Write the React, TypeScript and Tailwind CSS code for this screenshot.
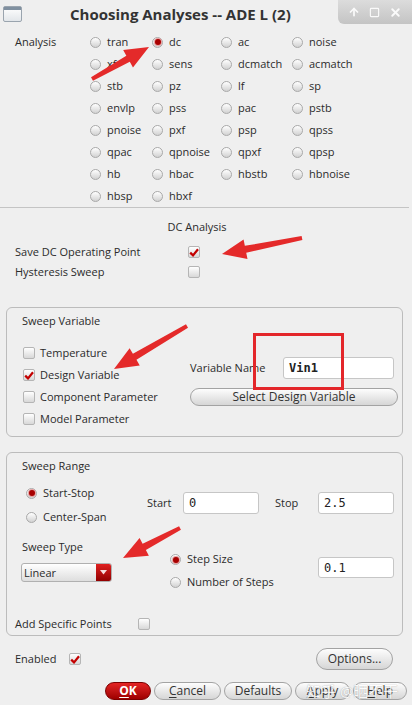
import React from 'react';
import { ArrowUp, Square, X } from 'lucide-react';

const Radio = ({ checked = false }: { checked?: boolean }) => (
  <span className="inline-flex h-[11px] w-[11px] shrink-0 items-center justify-center rounded-full border border-[#a9a9a9] bg-linear-to-b from-white to-[#d2d2d2]">
    {checked && <span className="h-[6px] w-[6px] rounded-full bg-[#a80000] shadow-[0_0_0_1px_#e7a0a0]" />}
  </span>
);

const Check = ({ checked = false }: { checked?: boolean }) => (
  <span className="inline-flex h-[12px] w-[12px] shrink-0 items-center justify-center rounded-[2px] border border-[#b5b5b5] bg-linear-to-b from-white to-[#d8d8d8]">
    {checked && (
      <svg width="10" height="9" viewBox="0 0 10 9">
        <path d="M1.2 4.6 L4 7.4 L9 1.2" stroke="#c30000" strokeWidth="2.2" fill="none" />
      </svg>
    )}
  </span>
);

const Pill = ({ children, className = '' }: { children: React.ReactNode; className?: string }) => (
  <div
    className={`flex items-center justify-center rounded-full border border-[#a3a3a3] bg-linear-to-b from-[#fdfdfd] to-[#d6d6d6] text-[12px] text-[#333] ${className}`}
  >
    {children}
  </div>
);

const Field = ({ value, className = '' }: { value: string; className?: string }) => (
  <div
    className={`flex items-center rounded-[3px] border border-[#c6c6c6] bg-white pl-[5px] font-['DejaVu_Sans_Mono',monospace] text-[12px] text-[#222] ${className}`}
  >
    {value}
  </div>
);

const Arrow = ({ x1, y1, x2, y2 }: { x1: number; y1: number; x2: number; y2: number }) => {
  const dx = x2 - x1;
  const dy = y2 - y1;
  const len = Math.hypot(dx, dy);
  const ux = dx / len;
  const uy = dy / len;
  const nx = -uy;
  const ny = ux;
  const head = 24;
  const hw = 10;
  const bx = x2 - ux * head;
  const by = y2 - uy * head;
  const pts = [
    [x1 + nx * 2, y1 + ny * 2],
    [bx + nx * 3.5, by + ny * 3.5],
    [bx + nx * hw, by + ny * hw],
    [x2, y2],
    [bx - nx * hw, by - ny * hw],
    [bx - nx * 3.5, by - ny * 3.5],
    [x1 - nx * 2, y1 - ny * 2],
  ]
    .map((p) => p.join(','))
    .join(' ');
  return <polygon points={pts} fill="#e42a2a" />;
};

const analyses = [
  ['tran', 'dc', 'ac', 'noise'],
  ['xf', 'sens', 'dcmatch', 'acmatch'],
  ['stb', 'pz', 'lf', 'sp'],
  ['envlp', 'pss', 'pac', 'pstb'],
  ['pnoise', 'pxf', 'psp', 'qpss'],
  ['qpac', 'qpnoise', 'qpxf', 'qpsp'],
  ['hb', 'hbac', 'hbstb', 'hbnoise'],
  ['hbsp', 'hbxf'],
];

export default function App() {
  return (
    <div className="relative h-[705px] w-[412px] overflow-hidden bg-[#efefef] font-['Open_Sans','Noto_Sans_CJK_SC',sans-serif] text-[11px] text-[#2b2b2b]">
      {/* title bar */}
      <div className="relative flex h-[28px] items-center">
        <div className="ml-[3px] h-[16px] w-[19px] rounded-[2px] border border-[#9aa4ae] bg-linear-to-b from-[#ffffff] to-[#e2e6ea]">
          <div className="h-[3px] bg-[#8090a0]" />
        </div>
        <div className="ml-[48px] text-[15px] font-bold text-[#333]">Choosing Analyses -- ADE L (2)</div>
        <div className="absolute right-0 top-0 flex h-[24px] w-[74px] items-center justify-around rounded-bl-[6px] bg-linear-to-b from-[#dcdcdc] to-[#c4c4c4] px-[6px]">
          <ArrowUp size={12} strokeWidth={3.5} color="#fafafa" />
          <Square size={11} strokeWidth={2.5} color="#fafafa" />
          <X size={13} strokeWidth={3.5} color="#fafafa" />
        </div>
      </div>

      {/* analysis */}
      <div className="flex pl-[15px] pt-[3px]">
        <div className="flex h-[22px] w-[75px] items-center">Analysis</div>
        <div className="grid grid-cols-[62px_69px_71px_1fr]">
          {analyses.flat().map((a) => (
            <div key={a} className="flex h-[22px] items-center gap-[6px]">
              <Radio checked={a === 'dc'} />
              <span>{a}</span>
            </div>
          ))}
        </div>
      </div>
      <div className="mr-[3px] border-t border-[#c4c4c4]" />

      {/* DC Analysis */}
      <div className="mt-[8px] flex h-[22px] items-center justify-center pr-[18px]">DC Analysis</div>
      <div className="mt-[4px] pl-[15px]">
        <div className="flex h-[20px] items-center">
          <span className="w-[173px]">Save DC Operating Point</span>
          <Check checked />
        </div>
        <div className="flex h-[20px] items-center">
          <span className="w-[173px]">Hysteresis Sweep</span>
          <Check />
        </div>
      </div>

      {/* Sweep Variable */}
      <div className="ml-[6px] mr-[9px] mt-[25px] rounded-[6px] border border-[#bcbcbc] pb-[6px] pt-[3px]">
        <div className="flex h-[20px] items-center pl-[15px]">Sweep Variable</div>
        <div className="mt-[11px] flex">
          <div className="w-[183px] pl-[16px]">
            {[
              ['Temperature', false],
              ['Design Variable', true],
              ['Component Parameter', false],
              ['Model Parameter', false],
            ].map(([t, c]) => (
              <div key={t as string} className="flex h-[22px] items-center gap-[5px]">
                <Check checked={c as boolean} />
                <span>{t}</span>
              </div>
            ))}
          </div>
          <div className="flex-1 pr-[4px] pt-[15px]">
            <div className="flex h-[22px] items-center">
              <span className="w-[93px]">Variable Name</span>
              <Field value="Vin1" className="h-[22px] w-[111px] font-bold" />
            </div>
            <Pill className="mt-[9px] h-[18px] w-full">Select Design Variable</Pill>
          </div>
        </div>
      </div>

      {/* Sweep Range */}
      <div className="ml-[6px] mr-[9px] mt-[15px] rounded-[6px] border border-[#bcbcbc] pb-[1px] pt-[3px]">
        <div className="flex h-[20px] items-center pl-[15px]">Sweep Range</div>
        <div className="mt-[5px] flex">
          <div className="w-[140px] pl-[19px]">
            <div className="flex h-[24px] items-center gap-[6px]">
              <Radio checked />
              <span>Start-Stop</span>
            </div>
            <div className="flex h-[24px] items-center gap-[6px]">
              <Radio />
              <span>Center-Span</span>
            </div>
          </div>
          <div className="mt-[11px] flex h-[22px] items-center">
            <span className="w-[36px]">Start</span>
            <Field value="0" className="h-[22px] w-[76px]" />
            <span className="ml-[16px] w-[43px]">Stop</span>
            <Field value="2.5" className="h-[22px] w-[76px]" />
          </div>
        </div>
        <div className="mt-[8px] flex">
          <div className="w-[163px] pl-[14px]">
            <div className="flex h-[20px] items-center pl-[1px]">Sweep Type</div>
            <div className="mt-[6px] flex h-[19px] w-[91px] overflow-hidden rounded-[3px] border border-[#b0b0b0] bg-linear-to-b from-white to-[#dedede]">
              <span className="flex flex-1 items-center pl-[2px] leading-none">Linear</span>
              <span className="flex w-[15px] items-center justify-center bg-linear-to-b from-[#e02020] to-[#920000]">
                <svg width="7" height="5" viewBox="0 0 7 5">
                  <path d="M0 0 H7 L3.5 4.5 Z" fill="#f5dcdc" />
                </svg>
              </span>
            </div>
          </div>
          <div className="w-[148px] pt-[11px]">
            <div className="flex h-[23px] items-center gap-[6px]">
              <Radio checked />
              <span>Step Size</span>
            </div>
            <div className="flex h-[23px] items-center gap-[6px]">
              <Radio />
              <span>Number of Steps</span>
            </div>
          </div>
          <div className="pt-[20px]">
            <Field value="0.1" className="h-[21px] w-[76px]" />
          </div>
        </div>
        <div className="mt-[20px] flex h-[20px] items-center pl-[8px]">
          <span className="w-[123px]">Add Specific Points</span>
          <Check />
        </div>
      </div>

      {/* Enabled + options */}
      <div className="mt-[12px] flex h-[22px] items-center pl-[15px] pr-[19px]">
        <span className="w-[54px]">Enabled</span>
        <Check checked />
        <Pill className="ml-auto h-[22px] w-[77px]">Options...</Pill>
      </div>

      {/* bottom buttons */}
      <div className="mt-[12px] flex h-[18px] justify-end gap-[3px] pr-[5px]">
        <div className="flex w-[46px] items-center justify-center rounded-full border border-[#7a0000] bg-linear-to-b from-[#e42424] to-[#9e0000] text-[12px] font-bold text-white">
          <span className="underline underline-offset-2">O</span>K
        </div>
        <Pill className="w-[67px]">
          <span className="underline underline-offset-2">C</span>ancel
        </Pill>
        <Pill className="w-[68px]">Defaults</Pill>
        <Pill className="w-[55px]">
          <span className="underline underline-offset-2">A</span>pply
        </Pill>
        <Pill className="w-[54px]">
          <span className="underline underline-offset-2">H</span>elp
        </Pill>
      </div>

      {/* annotations */}
      <div className="absolute left-[253px] top-[333px] h-[57px] w-[91px] border-[3px] border-[#e3262a]" />
      <div className="absolute left-[306px] top-[680px] text-[15px] text-white opacity-80 [text-shadow:0_0_1px_#888]">
        知乎 @晒不干
      </div>
      <svg className="pointer-events-none absolute left-0 top-0" width="412" height="705">
        <Arrow x1={92} y1={79} x2={149} y2={47} />
        <Arrow x1={302} y1={238} x2={222} y2={254} />
        <Arrow x1={187} y1={326} x2={114} y2={369} />
        <Arrow x1={180} y1={528} x2={123} y2={558} />
      </svg>
    </div>
  );
}
